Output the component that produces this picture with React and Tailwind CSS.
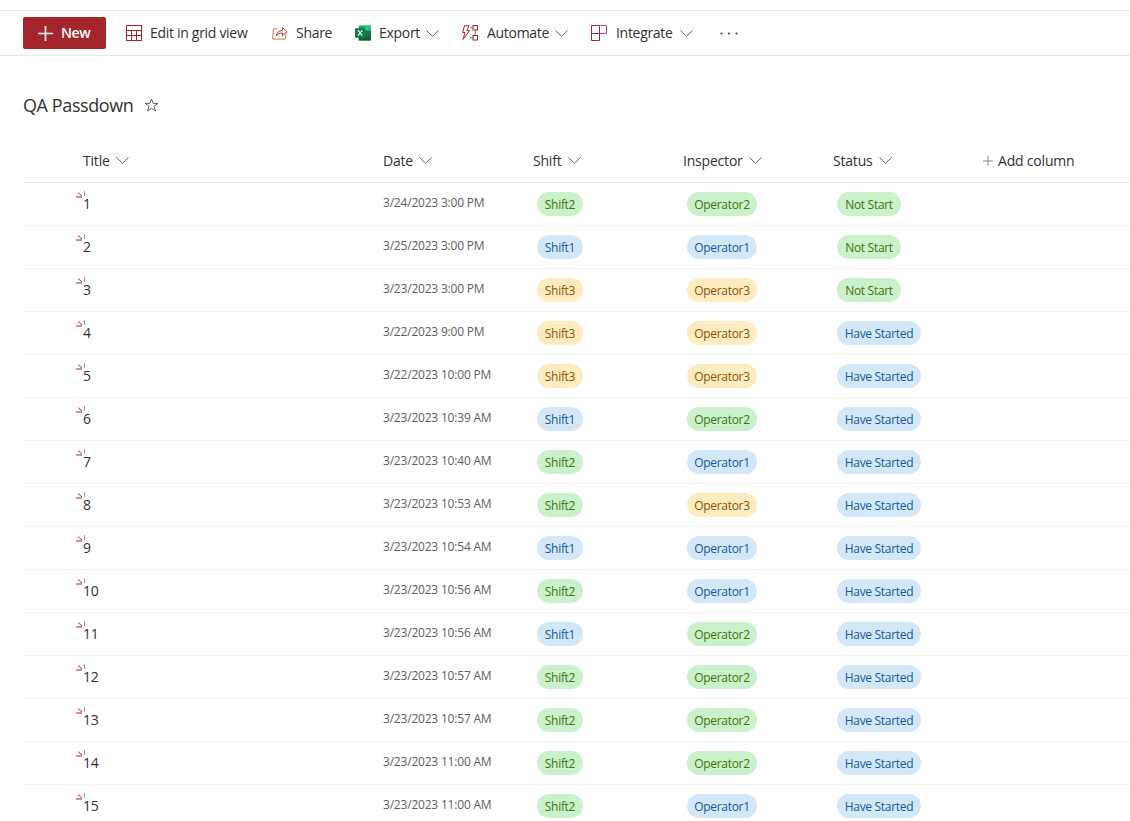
// App.jsx — SharePoint list view "QA Passdown"

const green = 'bg-[#caf0cc] text-[#437406]'
const blue = 'bg-[#d4e7f6] text-[#125aa3]'
const amber = 'bg-[#ffebc0] text-[#8a5500]'
const shiftColor = { Shift1: blue, Shift2: green, Shift3: amber }
const operatorColor = { Operator1: blue, Operator2: green, Operator3: amber }
const statusColor = { 'Not Start': green, 'Have Started': blue }

const rows = [
  ['1', '3/24/2023 3:00 PM', 'Shift2', 'Operator2', 'Not Start'],
  ['2', '3/25/2023 3:00 PM', 'Shift1', 'Operator1', 'Not Start'],
  ['3', '3/23/2023 3:00 PM', 'Shift3', 'Operator3', 'Not Start'],
  ['4', '3/22/2023 9:00 PM', 'Shift3', 'Operator3', 'Have Started'],
  ['5', '3/22/2023 10:00 PM', 'Shift3', 'Operator3', 'Have Started'],
  ['6', '3/23/2023 10:39 AM', 'Shift1', 'Operator2', 'Have Started'],
  ['7', '3/23/2023 10:40 AM', 'Shift2', 'Operator1', 'Have Started'],
  ['8', '3/23/2023 10:53 AM', 'Shift2', 'Operator3', 'Have Started'],
  ['9', '3/23/2023 10:54 AM', 'Shift1', 'Operator1', 'Have Started'],
  ['10', '3/23/2023 10:56 AM', 'Shift2', 'Operator1', 'Have Started'],
  ['11', '3/23/2023 10:56 AM', 'Shift1', 'Operator2', 'Have Started'],
  ['12', '3/23/2023 10:57 AM', 'Shift2', 'Operator2', 'Have Started'],
  ['13', '3/23/2023 10:57 AM', 'Shift2', 'Operator2', 'Have Started'],
  ['14', '3/23/2023 11:00 AM', 'Shift2', 'Operator2', 'Have Started'],
  ['15', '3/23/2023 11:00 AM', 'Shift2', 'Operator1', 'Have Started'],
]

function Chevron() {
  return (
    <svg width="13" height="7" viewBox="0 0 13 7" fill="none" stroke="#605e5c" strokeWidth="1">
      <path d="M0.5 0.5L6.5 6.3L12.5 0.5" />
    </svg>
  )
}

function GridIcon() {
  return (
    <svg width="16" height="16" viewBox="0 0 16 16" fill="none" stroke="#a4262c" strokeWidth="1">
      <rect x="0.5" y="0.5" width="15" height="15" />
      <path d="M0.5 5.5H15.5M0.5 10.5H15.5M5.5 5.5V15.5M10.5 5.5V15.5" />
    </svg>
  )
}

function ShareIcon() {
  return (
    <svg width="16" height="16" viewBox="0 0 17 16" fill="none" strokeWidth="1">
      <path d="M6 3.5H1.5L0.7 14.5H14L15 9" stroke="#c8742c" />
      <path d="M4.5 11C5 7.5 7.5 5.5 11 5.5V2.2L16 6.7L11 11V8C8.5 8 6 9 4.5 11Z" stroke="#a4262c" />
    </svg>
  )
}

function ExcelIcon() {
  return (
    <svg width="16" height="16" viewBox="0 0 17 16">
      <rect x="4" y="0" width="13" height="16" rx="1" fill="#21a366" />
      <rect x="10" y="0" width="7" height="5.5" fill="#33c481" />
      <rect x="10" y="5.5" width="7" height="5" fill="#107c41" />
      <rect x="4" y="10.5" width="13" height="5.5" fill="#185c37" />
      <rect x="0" y="3" width="11" height="10" rx="1" fill="#107c41" />
      <path d="M3.2 5.2L7.8 10.8M7.8 5.2L3.2 10.8" stroke="#fff" strokeWidth="1.2" />
    </svg>
  )
}

function AutomateIcon() {
  return (
    <svg width="16" height="16" viewBox="0 0 16 16" fill="none" strokeWidth="1">
      <path d="M5.5 0.7H2.5L0.7 7.5H3L1 14.5L7.5 5.5H4.8L7 0.7Z" stroke="#a4262c" />
      <rect x="11" y="0.5" width="4.5" height="4.5" stroke="#a4262c" />
      <rect x="11" y="10.5" width="4.5" height="4.5" stroke="#a4262c" />
      <path d="M8 2.7H11M13.2 5V10.5M8 12.7H11" stroke="#8a6d7a" />
    </svg>
  )
}

function IntegrateIcon() {
  return (
    <svg width="16" height="16" viewBox="0 0 16 16" fill="none" stroke="#a4262c" strokeWidth="1">
      <path d="M0.5 0.5H8.5V15.5H0.5Z" />
      <path d="M0.5 8.5H8.5" />
      <path d="M8.5 0.5H15.5V8.5H8.5" stroke="#b4468c" />
    </svg>
  )
}

function LoadingMark() {
  // the little broken-image style marker sitting just before each title
  return (
    <svg className="absolute left-[-7px] top-[-3px]" width="9" height="7" viewBox="0 0 9 7" fill="none" strokeWidth="1">
      <path d="M0 6H6" stroke="#a4262c" />
      <path d="M2 1.5L6 5" stroke="#a4262c" />
      <path d="M8.5 0V5" stroke="#8a9ab0" />
    </svg>
  )
}

function CommandButton({ icon, label, labelWidth, gap, labelGap = 'ml-[8px]', menu }) {
  return (
    <div className={`flex items-center ${gap}`}>
      {icon}
      <span className={`whitespace-nowrap pb-[2px] text-[14px] tracking-[-0.3px] text-[#323130] ${labelGap} ${labelWidth}`}>{label}</span>
      {menu && <span className="ml-[7px] flex"><Chevron /></span>}
    </div>
  )
}

function HeaderCell({ label }) {
  return (
    <div className="flex items-center gap-[6px] pb-[2px] text-[14px] font-medium tracking-[-0.2px] text-[#323130]">
      {label}
      <Chevron />
    </div>
  )
}

function Pill({ label, color, width }) {
  return (
    <span className={`ml-[4px] flex h-[24px] items-center justify-center rounded-full pt-[1px] text-[12px] tracking-[-0.3px] ${width} ${color}`}>
      {label}
    </span>
  )
}

const columns = 'grid grid-cols-[60px_300px_150px_150px_150px_150px_1fr]'

export default function App() {
  return (
    <div className="h-[821px] w-[1130px] overflow-hidden bg-white font-['Open_Sans',sans-serif] tracking-[-0.2px]">
      <div className="h-[10px]" />
      <div className="flex h-[46px] items-center border-y border-[#e9e9e9] pl-[23px]">
        <button className="flex h-[32px] w-[83px] items-center rounded-[2px] bg-[#a4262c] pl-[15px] text-[14px] font-semibold tracking-[-0.4px] text-white">
          <svg width="15" height="15" viewBox="0 0 15 15" fill="none" stroke="#fff" strokeWidth="1.6">
            <path d="M7.5 0V15M0 7.5H15" />
          </svg>
          <span className="ml-[8px] pb-[1px]">New</span>
        </button>
        <div className="ml-[20px] flex items-center">
          <CommandButton icon={<GridIcon />} label="Edit in grid view" labelWidth="w-[99px]" />
          <CommandButton icon={<ShareIcon />} label="Share" labelWidth="w-[35px]" gap="ml-[23px]" />
          <CommandButton icon={<ExcelIcon />} label="Export" labelWidth="w-[40px]" gap="ml-[24px]" menu />
          <CommandButton icon={<AutomateIcon />} label="Automate" labelWidth="w-[61px]" gap="ml-[23px]" labelGap="ml-[9px]" menu />
          <CommandButton icon={<IntegrateIcon />} label="Integrate" labelWidth="w-[57px]" gap="ml-[23px]" labelGap="ml-[9px]" menu />
          <svg className="ml-[27px]" width="18" height="3" viewBox="0 0 18 3" fill="#484644">
            <circle cx="1.5" cy="1.5" r="1.1" />
            <circle cx="9" cy="1.5" r="1.1" />
            <circle cx="16.5" cy="1.5" r="1.1" />
          </svg>
        </div>
      </div>

      <div className="mt-[34px] flex items-center pl-[23px]">
        <h1 className="text-[18px] font-medium leading-[30px] tracking-[-0.4px] text-[#323130]">QA Passdown</h1>
        <svg className="ml-[11px]" width="15" height="14" viewBox="0 0 15 14" fill="none" stroke="#605e5c" strokeWidth="1">
          <path d="M7.5 1L9.2 5.4H14L10.1 8.3L11.5 13L7.5 10.2L3.5 13L4.9 8.3L1 5.4H5.8Z" />
        </svg>
      </div>

      <div className="ml-[23px] mt-[21px]">
        <div className={`${columns} h-[42px] items-center border-b border-[#e8e8e8]`}>
          <div />
          <HeaderCell label="Title" />
          <HeaderCell label="Date" />
          <HeaderCell label="Shift" />
          <HeaderCell label="Inspector" />
          <HeaderCell label="Status" />
          <div className="flex items-center pb-[2px] text-[14px] font-medium tracking-[-0.2px] text-[#323130]">
            <svg width="10" height="10" viewBox="0 0 10 10" fill="none" stroke="#8a8886" strokeWidth="1">
              <path d="M5 0V10M0 5H10" />
            </svg>
            <span className="ml-[5px]">Add column</span>
          </div>
        </div>
        {rows.map(([title, date, shift, inspector, status]) => (
          <div key={title} className={`${columns} h-[43px] items-center border-b border-[#f3f2f1]`}>
            <div />
            <div className="relative text-[14px] leading-[20px] text-[#323130]">
              <LoadingMark />
              {title}
            </div>
            <div className="pb-[2px] text-[12px] text-[#605e5c]">{date}</div>
            <div className="flex"><Pill label={shift} color={shiftColor[shift]} width="w-[46px]" /></div>
            <div className="flex"><Pill label={inspector} color={operatorColor[inspector]} width="w-[70px]" /></div>
            <div className="flex">
              <Pill label={status} color={statusColor[status]} width={status === 'Not Start' ? 'w-[64px]' : 'w-[84px]'} />
            </div>
            <div />
          </div>
        ))}
      </div>
    </div>
  )
}
